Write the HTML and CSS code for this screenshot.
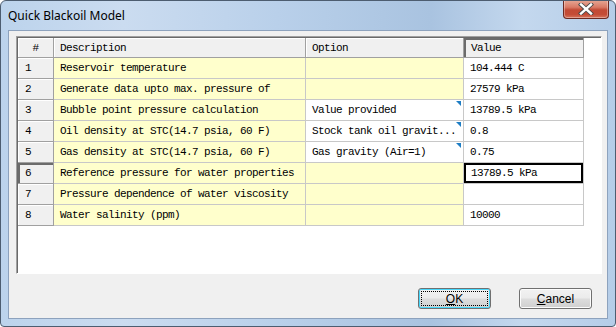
FILE: index.html
```html
<!DOCTYPE html>
<html>
<head>
<meta charset="utf-8">
<link rel="stylesheet" href="styles.css">
</head>
<body>
<div class="window">
  <div class="titlebar">
    <span class="title">Quick Blackoil Model</span>
    <div class="close">
      <svg width="16" height="12" viewBox="0 0 16 12">
        <path d="M3 1.5 L13 10.5 M13 1.5 L3 10.5" stroke="#4a4a4a" stroke-width="4.2" stroke-linecap="square"/>
        <path d="M3 1.5 L13 10.5 M13 1.5 L3 10.5" stroke="#ffffff" stroke-width="2.4" stroke-linecap="square"/>
      </svg>
    </div>
  </div>
  <div class="client">
    <div class="gridbox">
      <div class="grid">
        <div class="c hd hn">#</div>
        <div class="c hd">Description</div>
        <div class="c hd">Option</div>
        <div class="c hd hsel">Value</div>

        <div class="c rn">1</div>
        <div class="c y">Reservoir temperature</div>
        <div class="c y"></div>
        <div class="c w">104.444 C</div>

        <div class="c rn">2</div>
        <div class="c y">Generate data upto max. pressure of</div>
        <div class="c y"></div>
        <div class="c w">27579 kPa</div>

        <div class="c rn">3</div>
        <div class="c y">Bubble point pressure calculation</div>
        <div class="c w opt">Value provided</div>
        <div class="c w">13789.5 kPa</div>

        <div class="c rn">4</div>
        <div class="c y">Oil density at STC(14.7 psia, 60 F)</div>
        <div class="c w opt">Stock tank oil gravit...</div>
        <div class="c w">0.8</div>

        <div class="c rn">5</div>
        <div class="c y">Gas density at STC(14.7 psia, 60 F)</div>
        <div class="c w opt">Gas gravity (Air=1)</div>
        <div class="c w">0.75</div>

        <div class="c rn rsel">6</div>
        <div class="c y">Reference pressure for water properties</div>
        <div class="c y"></div>
        <div class="c w cur">13789.5 kPa</div>

        <div class="c rn">7</div>
        <div class="c y">Pressure dependence of water viscosity</div>
        <div class="c y"></div>
        <div class="c w"></div>

        <div class="c rn">8</div>
        <div class="c y">Water salinity (ppm)</div>
        <div class="c y"></div>
        <div class="c w">10000</div>
      </div>
    </div>
    <div class="buttons">
      <button class="btn default"><span class="focus"><u>O</u>K</span></button>
      <button class="btn"><span class="focus none"><u>C</u>ancel</span></button>
    </div>
  </div>
</div>
</body>
</html>
```
FILE: styles.css
```css
* { box-sizing: border-box; }
html, body { margin: 0; padding: 0; background: #ffffff; }
.window {
  width: 616px;
  height: 327px;
  border: 1px solid #4d5d70;
  border-radius: 6px 6px 4px 4px;
  background: linear-gradient(90deg, #bcd3ec 0%, #cbdcf0 20%, #b9d0ea 45%, #a9c3e0 70%, #c4d8ee 85%, #b5cde8 100%);
  display: flex;
  flex-direction: column;
  padding: 0 7px 7px 7px;
  overflow: hidden;
}
.titlebar {
  height: 29px;
  display: flex;
  align-items: flex-start;
  justify-content: space-between;
}
.title {
  font-family: "Noto Sans", sans-serif;
  font-size: 12px;
  color: #000;
  margin-top: 6px;
  letter-spacing: 0;
}
.close {
  width: 46px;
  height: 19px;
  margin-top: -1px;
  margin-right: -1px;
  border: 1px solid #6b2a22;
  border-top: none;
  border-radius: 0 0 4px 4px;
  background: linear-gradient(180deg, #e6a996 0%, #d97a66 40%, #c24a35 55%, #c44c36 80%, #d6745c 100%);
  display: flex;
  align-items: center;
  justify-content: center;
  box-shadow: inset 0 0 0 1px rgba(255,255,255,0.35);
}
.client {
  flex: 1;
  background: #f0f0f0;
  border: 1px solid #8da2bd;
  display: flex;
  flex-direction: column;
  padding: 5px 5px 9px 7px;
}
.gridbox {
  height: 238px;
  background: #ffffff;
  border-top: 1px solid #a0a0a0;
  border-left: 1px solid #a0a0a0;
  border-right: 1px solid #ffffff;
  border-bottom: 1px solid #ffffff;
  box-shadow: inset 1px 1px 0 #696969, 0 0 0 0 transparent;
  padding: 1px 0 0 1px;
}
.grid {
  display: grid;
  grid-template-columns: 36px 252px 158px 120px;
  grid-template-rows: 20px repeat(8, 21px);
  font-family: "Liberation Mono", monospace;
  font-size: 11px;
  letter-spacing: -0.6px;
  color: #000;
}
.c {
  border-right: 1px solid #c8c8c8;
  border-bottom: 1px solid #c8c8c8;
  display: flex;
  align-items: center;
  padding-left: 6px;
  white-space: nowrap;
  overflow: hidden;
  position: relative;
}
.hd {
  background: #f0f0f0;
  border-right-color: #a0a0a0;
  border-bottom-color: #a0a0a0;
  box-shadow: inset 1px 1px 0 #ffffff;
}
.hn { justify-content: center; padding-left: 0; }
.hsel { box-shadow: inset 2px 2px 0 #6b6b6b; padding-left: 7px; }
.rn {
  background: #f0f0f0;
  border-right-color: #a0a0a0;
  border-bottom-color: #a0a0a0;
  box-shadow: inset 1px 1px 0 #ffffff;
  padding-left: 7px;
}
.rsel { box-shadow: inset 2px 2px 0 #6b6b6b; }
.y { background: #ffffcc; }
.w { background: #ffffff; padding-left: 6px; }
.opt::after {
  content: "";
  position: absolute;
  top: 1px;
  right: 2px;
  width: 0;
  height: 0;
  border-top: 5px solid #1d7dc4;
  border-left: 5px solid transparent;
}
.cur {
  box-shadow: inset 0 0 0 2px #000000;
  padding-left: 7px;
}
.buttons {
  margin-top: auto;
  display: flex;
  justify-content: flex-end;
  gap: 28px;
  padding-right: 10px;
}
.btn {
  width: 73px;
  height: 21px;
  border: 1px solid #707070;
  border-radius: 3px;
  background: linear-gradient(180deg, #f2f2f2 0%, #ebebeb 48%, #dddddd 52%, #cfcfcf 100%);
  box-shadow: inset 0 0 0 1px #fcfcfc;
  font-family: "Liberation Sans", sans-serif;
  font-size: 12px;
  color: #000;
  padding: 2px;
  display: flex;
}
.btn.default { border-color: #3c7fb1; box-shadow: inset 0 0 0 1px #48d8fb; border-color: #707070; }
.focus {
  flex: 1;
  display: flex;
  align-items: center;
  justify-content: center;
  border: 1px dotted #000;
}
.focus.none { border-color: transparent; }
```
